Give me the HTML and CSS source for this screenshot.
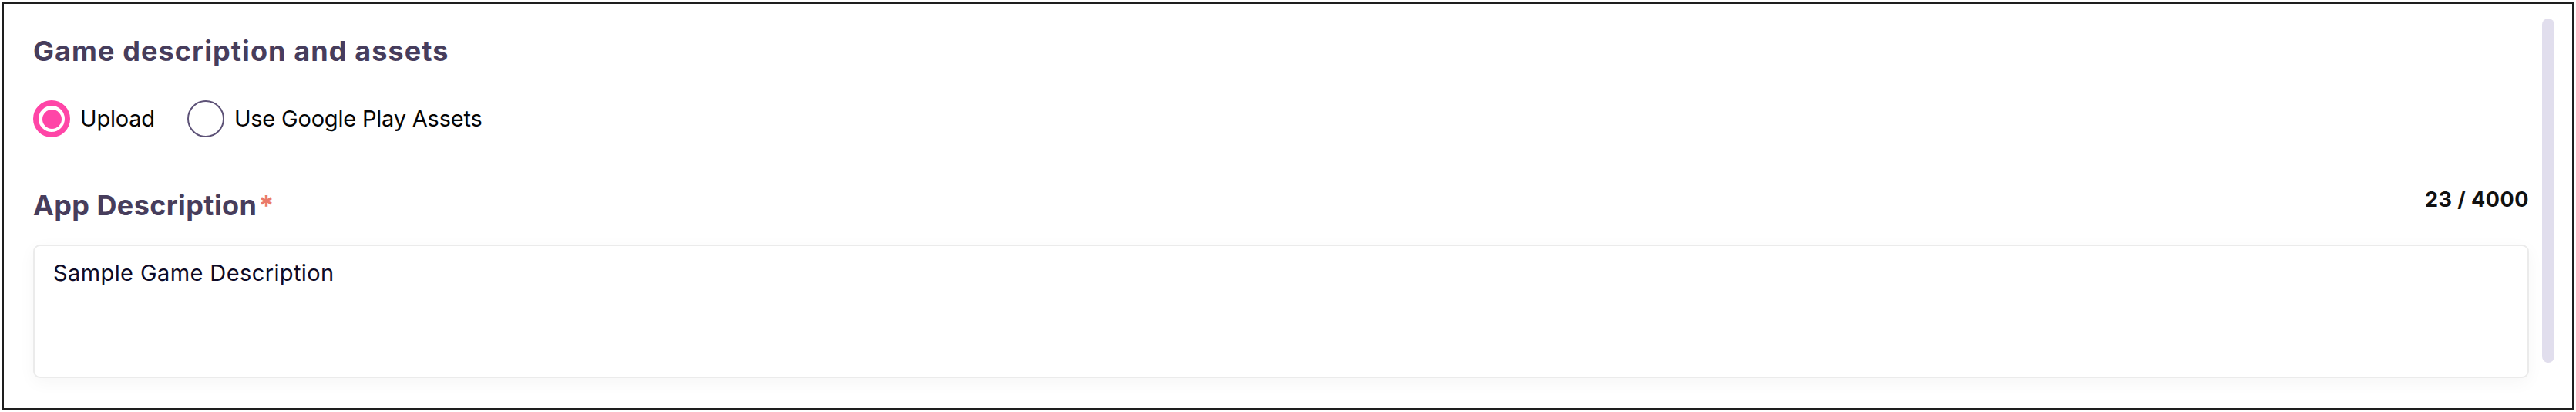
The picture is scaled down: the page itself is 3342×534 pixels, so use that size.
FILE: index.html
```html
<!DOCTYPE html>
<html lang="en">
<head>
<meta charset="utf-8">
<title>Game description and assets</title>
<link rel="stylesheet" href="styles.css">
</head>
<body>
<section class="panel">
  <h2 class="title">Game description and assets</h2>
  <div class="radios">
    <label class="radio-item">
      <span class="radio checked"><span class="dot"></span></span>
      <span class="radio-text">Upload</span>
    </label>
    <label class="radio-item">
      <span class="radio"></span>
      <span class="radio-text">Use Google Play Assets</span>
    </label>
  </div>
  <div class="field-head">
    <div class="field-label">App Description<span class="req">*</span></div>
    <div class="counter">23 / 4000</div>
  </div>
  <textarea class="desc" readonly>Sample Game Description</textarea>
  <div class="scroll-thumb"></div>
</section>
</body>
</html>
```

FILE: styles.css
```css
* { box-sizing: border-box; }
html, body { margin: 0; padding: 0; background: #ffffff; }
body {
  padding: 2px;
  font-family: Inter, "Liberation Sans", sans-serif;
}
.panel {
  position: relative;
  height: 530px;
  border: 3px solid #1e1e1e;
  padding: 39px 56px 0 38px;
  overflow: hidden;
  background: #ffffff;
}
.title {
  margin: 0;
  font-size: 36px;
  line-height: 44px;
  font-weight: 700;
  color: #473d5c;
  letter-spacing: 1.1px;
}
.radios {
  margin-top: 42px;
  display: flex;
  align-items: center;
  gap: 42px;
  height: 48px;
}
.radio-item {
  display: flex;
  align-items: center;
  gap: 13px;
}
.radio {
  width: 48px;
  height: 48px;
  border-radius: 50%;
  border: 2px solid #5d5277;
  display: flex;
  align-items: center;
  justify-content: center;
  flex: none;
}
.radio.checked {
  border: 7px solid #ff45a7;
  background: #ffffff;
}
.dot {
  width: 25px;
  height: 25px;
  border-radius: 50%;
  background: #ff45a7;
}
.radio-text {
  font-size: 29px;
  line-height: 36px;
  color: #050505;
  font-weight: 400;
  letter-spacing: -0.2px;
}
.field-head {
  margin-top: 66px;
  display: flex;
  justify-content: space-between;
  align-items: flex-start;
}
.field-label {
  font-size: 36px;
  line-height: 44px;
  font-weight: 700;
  color: #473d5c;
  letter-spacing: 0.4px;
}
.req {
  color: #ea7a6b;
  margin-left: 2px;
}
.counter {
  font-size: 27px;
  line-height: 30px;
  font-weight: 700;
  color: #111111;
  letter-spacing: 0.5px;
}
.desc {
  display: block;
  width: 100%;
  height: 173px;
  margin-top: 29px;
  border: 2px solid #ebebeb;
  border-radius: 9px;
  padding: 17px 24px;
  font-family: Inter, "Liberation Sans", sans-serif;
  font-size: 29px;
  line-height: 36px;
  letter-spacing: 0.4px;
  color: #0d0a26;
  background: #ffffff;
  resize: none;
  outline: none;
  box-shadow: 0 6px 22px rgba(0, 0, 0, 0.04);
}
.scroll-thumb {
  position: absolute;
  top: 19px;
  right: 23px;
  width: 16px;
  height: 446px;
  border-radius: 8px;
  background: #e1deed;
}
```
